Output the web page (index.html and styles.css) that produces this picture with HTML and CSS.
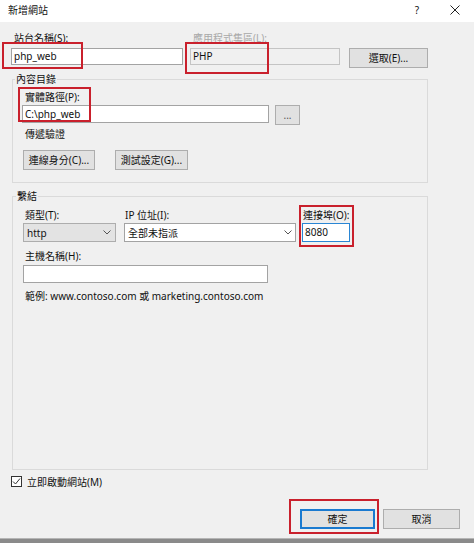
FILE: index.html
```html
<!DOCTYPE html>
<html lang="zh-Hant">
<head>
<meta charset="utf-8">
<title>新增網站</title>
<link rel="stylesheet" href="styles.css">
</head>
<body>
<div class="dialog">
  <div class="titlebar">
    <span class="title">新增網站</span>
    <span class="help">?</span>
    <svg class="close" width="10" height="10" viewBox="0 0 10 10"><path d="M0.5 0.5 L9.5 9.5 M9.5 0.5 L0.5 9.5" stroke="#222" stroke-width="1" fill="none"/></svg>
  </div>
  <div class="body">
    <div class="site-row">
      <div class="field f-site">
        <div class="label pad3">站台名稱(S):</div>
        <div class="textbox">php_web</div>
      </div>
      <div class="field f-pool">
        <div class="label pad3 disabled">應用程式集區(L):</div>
        <div class="textbox readonly">PHP</div>
      </div>
      <div class="btn btn-select">選取(E)...</div>
    </div>

    <fieldset class="group group-content">
      <legend class="legend-content">內容目錄</legend>
      <div class="label lbl-path">實體路徑(P):</div>
      <div class="path-row">
        <div class="textbox path">C:\php_web</div>
        <div class="btn btn-browse">...</div>
      </div>
      <div class="label lbl-auth">傳遞驗證</div>
      <div class="auth-row">
        <div class="btn btn-connect">連線身分(C)...</div>
        <div class="btn btn-test">測試設定(G)...</div>
      </div>
    </fieldset>

    <fieldset class="group group-binding">
      <legend class="legend-binding">繫結</legend>
      <div class="binding-row">
        <div class="bfield b-type">
          <div class="label pad2">類型(T):</div>
          <div class="combo combo-type"><span>http</span><svg class="chev" width="8" height="5" viewBox="0 0 8 5"><path d="M0.5 0.5 L4 4 L7.5 0.5" stroke="#555" stroke-width="1" fill="none"/></svg></div>
        </div>
        <div class="bfield b-ip">
          <div class="label pad1">IP 位址(I):</div>
          <div class="combo combo-ip"><span>全部未指派</span><svg class="chev" width="8" height="5" viewBox="0 0 8 5"><path d="M0.5 0.5 L4 4 L7.5 0.5" stroke="#555" stroke-width="1" fill="none"/></svg></div>
        </div>
        <div class="bfield b-port">
          <div class="label pad1">連接埠(O):</div>
          <div class="textbox port">8080</div>
        </div>
      </div>
      <div class="label lbl-host">主機名稱(H):</div>
      <div class="textbox host"></div>
      <div class="label lbl-example">範例: www.contoso.com 或 marketing.contoso.com</div>
    </fieldset>

    <div class="check-row">
      <svg class="checkbox" width="11" height="11" viewBox="0 0 11 11"><rect x="0.5" y="0.5" width="10" height="10" fill="#fff" stroke="#333"/><path d="M2 5.5 L4.5 8 L9 2.5" stroke="#333" stroke-width="1" fill="none"/></svg>
      <span class="check-label">立即啟動網站(M)</span>
    </div>

    <div class="footer">
      <div class="btn btn-ok">確定</div>
      <div class="btn btn-cancel">取消</div>
    </div>
  </div>
  <div class="bottom-bar"></div>

  <div class="mark m1"></div>
  <div class="mark m2"></div>
  <div class="mark m3"></div>
  <div class="mark m4"></div>
  <div class="mark m5"></div>
</div>
</body>
</html>
```

FILE: styles.css
```css
* {
  box-sizing: border-box;
}

html, body {
  margin: 0;
  padding: 0;
}

body {
  font-family: "Noto Sans", "Noto Sans CJK TC", sans-serif;
  font-size: 10px;
  color: #111;
  background: #f0f0f0;
}

.dialog {
  position: relative;
  width: 474px;
  height: 543px;
  display: flex;
  flex-direction: column;
  overflow: hidden;
}

.titlebar {
  height: 22px;
  flex: 0 0 22px;
  background: #fff;
  display: flex;
  align-items: center;
  padding: 0 0 2px 8px;
}

.title {
  line-height: 12px;
}

.help {
  margin-left: auto;
  line-height: 12px;
  font-size: 10px;
}

.close {
  margin: 0 14px 0 31px;
}

.body {
  flex: 1 1 auto;
  background: #f0f0f0;
  padding-top: 10px;
}

.bottom-bar {
  flex: 0 0 5px;
  height: 5px;
  background: #8a8a8a;
  border-top: 1px solid #b5b5b5;
}

.label {
  height: 12px;
  line-height: 12px;
  white-space: nowrap;
}

.pad1 { padding-left: 1px; }
.pad2 { padding-left: 2px; }
.pad3 { padding-left: 3px; }

.disabled {
  color: #a8a8a8;
}

.textbox {
  height: 17px;
  line-height: 15px;
  background: #fff;
  border: 1px solid #a3a3a3;
  padding: 0 2px;
  white-space: nowrap;
}

.textbox.readonly {
  background: #f0f0f0;
  border-color: #c4c4c4;
}

.btn {
  height: 20px;
  line-height: 18px;
  background: #e1e1e1;
  border: 1px solid #adadad;
  text-align: center;
  white-space: nowrap;
}

/* top row */
.site-row {
  display: flex;
  align-items: flex-start;
  padding-left: 11px;
}

.field .label {
  margin-bottom: 4px;
}

.f-site { width: 172px; }
.f-pool { width: 150px; margin-left: 7px; }

.btn-select {
  width: 79px;
  margin: 16px 0 0 9px;
}

/* group boxes */
.group {
  margin: 0 0 0 12px;
  width: 416px;
  min-inline-size: 0;
  padding: 0;
  border: 1px solid #dadada;
}

.group legend {
  padding: 0 1px;
  line-height: 12px;
  font-size: 10px;
}

.legend-content { margin-left: 2px; }
.legend-binding { margin-left: 3px; }

.group-content {
  margin-top: 5px;
  padding-bottom: 12px;
}

.lbl-path {
  margin: 6px 0 0 12px;
}

.path-row {
  display: flex;
  align-items: flex-start;
  margin: 2px 0 0 9px;
}

.textbox.path {
  width: 247px;
  height: 18px;
  line-height: 16px;
}

.btn-browse {
  width: 25px;
  margin-left: 6px;
  color: #555;
}

.lbl-auth {
  margin: 3px 0 0 12px;
}

.auth-row {
  display: flex;
  gap: 20px;
  margin: 10px 0 0 10px;
}

.btn-connect { width: 72px; }
.btn-test { width: 73px; }

.group-binding {
  margin-top: 7px;
  padding-bottom: 167px;
}

.binding-row {
  display: flex;
  margin: 7px 0 0 10px;
}

.bfield .label {
  margin-bottom: 2px;
}

.b-type { width: 93px; }
.b-ip { width: 172px; margin-left: 8px; }
.b-port { width: 48px; margin-left: 6px; }

.combo {
  height: 19px;
  display: flex;
  align-items: center;
  justify-content: space-between;
  padding: 0 4px 0 3px;
  border: 1px solid #a3a3a3;
  white-space: nowrap;
}

.combo-type {
  background: #e3e3e3;
  border-color: #adadad;
}

.combo-ip {
  background: #fff;
  padding-right: 3px;
}

.textbox.port {
  height: 19px;
  line-height: 17px;
  border-color: #2a86d4;
}

.lbl-host {
  margin: 8px 0 0 12px;
}

.textbox.host {
  width: 245px;
  height: 18px;
  margin: 3px 0 0 10px;
}

.lbl-example {
  margin: 7px 0 0 12px;
}

/* checkbox */
.check-row {
  display: flex;
  align-items: center;
  height: 11px;
  margin: 6px 0 0 11px;
}

.checkbox {
  display: block;
  flex: 0 0 11px;
}

.check-label {
  margin-left: 5px;
  line-height: 12px;
}

/* footer */
.footer {
  display: flex;
  margin-top: 22px;
  padding-left: 300px;
}

.btn-ok {
  width: 75px;
  border: 2px solid #1a7ad0;
  line-height: 16px;
}

.btn-cancel {
  width: 77px;
  margin-left: 8px;
}

/* red annotation boxes drawn over the dialog */
.mark {
  position: absolute;
  border: 2px solid #c9202c;
  pointer-events: none;
}

.m1 { left: 2px;   top: 42px;  width: 81px; height: 27px; }
.m2 { left: 185px; top: 42px;  width: 84px; height: 32px; }
.m3 { left: 18px;  top: 87px;  width: 73px; height: 35px; }
.m4 { left: 299px; top: 205px; width: 55px; height: 42px; }
.m5 { left: 289px; top: 499px; width: 90px; height: 35px; }
```
